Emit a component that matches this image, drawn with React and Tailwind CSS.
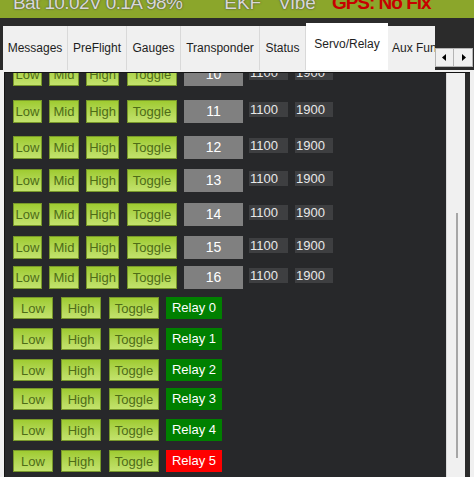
import React from "react";

const tabs = [
  { label: "Messages", w: "w-[65px]" },
  { label: "PreFlight", w: "w-[59px]" },
  { label: "Gauges", w: "w-[54px]" },
  { label: "Transponder", w: "w-[79px]" },
  { label: "Status", w: "w-[46px]" },
  { label: "Servo/Relay", w: "w-[82px]", active: true },
  { label: "Aux Function", w: "w-[47px]" },
];

// gap above each row, in px, as measured off the screenshot
const servoRows = [
  { ch: 10, mt: "-mt-[10px]" },
  { ch: 11, mt: "mt-[14px]" },
  { ch: 12, mt: "mt-[13px]" },
  { ch: 13, mt: "mt-[10px]" },
  { ch: 14, mt: "mt-[11px]" },
  { ch: 15, mt: "mt-[10px]" },
  { ch: 16, mt: "mt-[7px]" },
];

const relayRows = [
  { n: 0, mt: "mt-[8px]" },
  { n: 1, mt: "mt-[9px]" },
  { n: 2, mt: "mt-[9px]" },
  { n: 3, mt: "mt-[7px]" },
  { n: 4, mt: "mt-[9px]" },
  { n: 5, mt: "mt-[9px]", off: true },
];

const lime =
  "flex items-center justify-center border border-[#78982a] bg-gradient-to-b from-[#9fcb30] to-[#c3e26c] text-[#4e6c18] text-[13px] leading-none";

const LimeBtn = ({ w, children }) => <div className={`${lime} ${w} h-full`}>{children}</div>;

const ServoRow = ({ ch, mt }) => (
  <div className={`flex h-[23px] items-start shrink-0 ${mt}`}>
    <LimeBtn w="w-[29px]">Low</LimeBtn>
    <div className="ml-[7px] h-full">
      <LimeBtn w="w-[30px]">Mid</LimeBtn>
    </div>
    <div className="ml-[7px] h-full">
      <LimeBtn w="w-[33px]">High</LimeBtn>
    </div>
    <div className="ml-[8px] h-full">
      <LimeBtn w="w-[50px]">Toggle</LimeBtn>
    </div>
    <div className="ml-[7px] w-[59px] h-full bg-[#808080] text-white text-[14px] flex items-center justify-center">
      {ch}
    </div>
    <div className="ml-[6px] mt-[2px] w-[39px] h-[15px] bg-[#3e3f41] text-[#e8e8e8] text-[13px] leading-[15px] pl-[1px]">
      1100
    </div>
    <div className="ml-[7px] mt-[2px] w-[38px] h-[15px] bg-[#3e3f41] text-[#e8e8e8] text-[13px] leading-[15px] pl-[1px]">
      1900
    </div>
  </div>
);

const RelayRow = ({ n, mt, off }) => (
  <div className={`flex h-[22px] shrink-0 ${mt}`}>
    <LimeBtn w="w-[40px]">Low</LimeBtn>
    <div className="ml-[8px] h-full">
      <LimeBtn w="w-[40px]">High</LimeBtn>
    </div>
    <div className="ml-[8px] h-full">
      <LimeBtn w="w-[50px]">Toggle</LimeBtn>
    </div>
    <div
      className={`ml-[7px] w-[56px] h-full flex items-center justify-center text-white text-[13px] ${
        off ? "bg-[#ff0000]" : "bg-[#008000]"
      }`}
    >
      Relay {n}
    </div>
  </div>
);

export default function App() {
  return (
    <div className="w-[474px] h-[477px] overflow-hidden bg-[#f0f0f0] font-['Liberation_Sans','Noto_Sans',sans-serif] flex flex-col">
      {/* status bar, top cut off */}
      <div className="h-[18px] shrink-0 bg-[#8ba62b] overflow-hidden">
        <div className="flex items-start -mt-[10px] text-[19px] leading-[26px] whitespace-nowrap text-[#d8d8d8] [text-shadow:0_0_2px_#3a3a3a]">
          <span className="ml-[13px] tracking-[-0.6px]">Bat 10.02V 0.1A 98%</span>
          <span className="ml-[42px]">EKF</span>
          <span className="ml-[17px]">Vibe</span>
          <span className="ml-[16px] font-bold text-[#c80000] [text-shadow:none] tracking-[-1px]">GPS: No Fix</span>
        </div>
      </div>

      {/* tab strip */}
      <div className="h-[52px] shrink-0 bg-[#2b2b2b] flex items-end pl-[3px]">
        {tabs.map((t) => (
          <div
            key={t.label}
            className={`${t.w} shrink-0 overflow-hidden whitespace-nowrap flex items-center text-[12px] text-[#1e1e1e] ${
              t.active
                ? "h-[47px] bg-white justify-center pb-[6px]"
                : "h-[44px] bg-[#f0f0f0] border-r border-[#d9d9d9] justify-center"
            } ${t.label === "Aux Function" ? "justify-start pl-[4px] border-r-0" : ""}`}
          >
            {t.label}
          </div>
        ))}
        <div className="flex self-end mb-[3px]">
          <div className="w-[19px] h-[19px] bg-[#f0f0f0] border border-[#b4b4b4] flex items-center justify-center">
            <svg width="5" height="7" viewBox="0 0 5 7">
              <path d="M4 0 L0 3.5 L4 7 Z" fill="#000" />
            </svg>
          </div>
          <div className="w-[19px] h-[19px] bg-[#f0f0f0] border border-l-0 border-[#b4b4b4] flex items-center justify-center">
            <svg width="5" height="7" viewBox="0 0 5 7">
              <path d="M1 0 L5 3.5 L1 7 Z" fill="#000" />
            </svg>
          </div>
        </div>
      </div>

      {/* tab page */}
      <div className="flex-1 pt-[2px] pl-[4px] pr-[4px] min-h-0">
        <div className="h-full flex border-t border-l border-[#141414] bg-[#27282a]">
          <div className="flex-1 overflow-hidden pl-[8px] flex flex-col">
            {servoRows.map((r) => (
              <ServoRow key={r.ch} {...r} />
            ))}
            {relayRows.map((r) => (
              <RelayRow key={r.n} {...r} />
            ))}
          </div>
          <div className="w-[19px] shrink-0 bg-[#f0f0f0] border-l border-[#dadada] flex flex-col items-center">
            <div className="mt-[140px] ml-[1px] w-[2px] h-[245px] bg-[#a6a6a6]" />
          </div>
          <div className="w-[5px] shrink-0 bg-[#2a2a2a]" />
        </div>
      </div>
    </div>
  );
}
